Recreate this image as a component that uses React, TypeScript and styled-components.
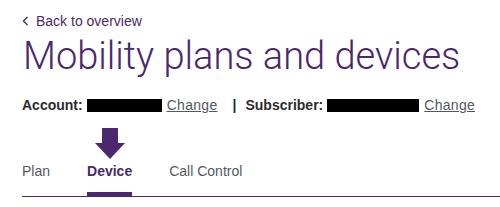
import React from "react";
import styled, { createGlobalStyle } from "styled-components";

const PURPLE = "#4b286d";
const TEXT = "#2a2c2e";
const GRAY = "#54595f";

const GlobalStyle = createGlobalStyle`
  body {
    margin: 0;
    background: #fff;
    font-family: "Liberation Sans", Arial, sans-serif;
  }
`;

export default function App() {
  const tabs = ["Plan", "Device", "Call Control"];
  const active = "Device";

  return (
    <>
      <GlobalStyle />
      <Page>
        <BackLink href="#">
          <svg width="7" height="10" viewBox="0 0 7 10">
            <path d="M5.5 1 L1.5 5 L5.5 9" fill="none" stroke={PURPLE} strokeWidth="1.4" />
          </svg>
          Back to overview
        </BackLink>
        <Title>Mobility plans and devices</Title>
        <AccountRow>
          <Label>Account:</Label>
          <Redacted $width={75} />
          <ChangeLink href="#">Change</ChangeLink>
          <Divider>|</Divider>
          <Label>Subscriber:</Label>
          <Redacted $width={92} />
          <ChangeLink href="#">Change</ChangeLink>
        </AccountRow>
        <TabBar>
          {tabs.map((tab) => (
            <Tab key={tab} $active={tab === active}>
              {tab === active && (
                <Arrow width="30" height="32" viewBox="0 0 30 32">
                  <path d="M7 0 H23 V15 H30 L15 31 L0 15 H7 Z" fill={PURPLE} />
                </Arrow>
              )}
              {tab}
            </Tab>
          ))}
        </TabBar>
      </Page>
    </>
  );
}

const Page = styled.div`
  padding: 11px 0 0 22px;
`;

const BackLink = styled.a`
  display: inline-flex;
  align-items: center;
  gap: 7px;
  font-size: 14px;
  line-height: 20px;
  color: ${PURPLE};
  text-decoration: none;
`;

const Title = styled.h1`
  margin: 3px 0 0 1px;
  font-family: "Roboto", "Liberation Sans", sans-serif;
  font-weight: 300;
  font-size: 38px;
  line-height: 44px;
  color: ${PURPLE};
`;

const AccountRow = styled.div`
  display: flex;
  align-items: center;
  margin-top: 18px;
  font-size: 14px;
  line-height: 18px;
`;

const Label = styled.span`
  font-weight: 700;
  color: ${TEXT};
`;

const Redacted = styled.span<{ $width: number }>`
  width: ${(p) => p.$width}px;
  height: 13px;
  margin: 0 5px 0 4px;
  background: #000;
`;

const ChangeLink = styled.a`
  color: ${GRAY};
  text-decoration: underline;
  letter-spacing: 0.3px;
`;

const Divider = styled.span`
  margin: 0 9px 0 15px;
  font-weight: 700;
  color: ${TEXT};
`;

const TabBar = styled.div`
  display: flex;
  gap: 37px;
  margin-top: 47px;
  border-bottom: 1px solid ${PURPLE};
`;

const Tab = styled.div<{ $active: boolean }>`
  position: relative;
  padding-bottom: 15px;
  font-size: 14px;
  line-height: 20px;
  font-weight: ${(p) => (p.$active ? 700 : 400)};
  color: ${(p) => (p.$active ? PURPLE : GRAY)};
  &::after {
    content: "";
    display: ${(p) => (p.$active ? "block" : "none")};
    position: absolute;
    left: 0;
    right: 0;
    bottom: -1px;
    height: 5px;
    background: ${PURPLE};
  }
`;

const Arrow = styled.svg`
  position: absolute;
  left: 50%;
  bottom: 100%;
  margin-bottom: 1px;
  transform: translateX(-50%);
`;
